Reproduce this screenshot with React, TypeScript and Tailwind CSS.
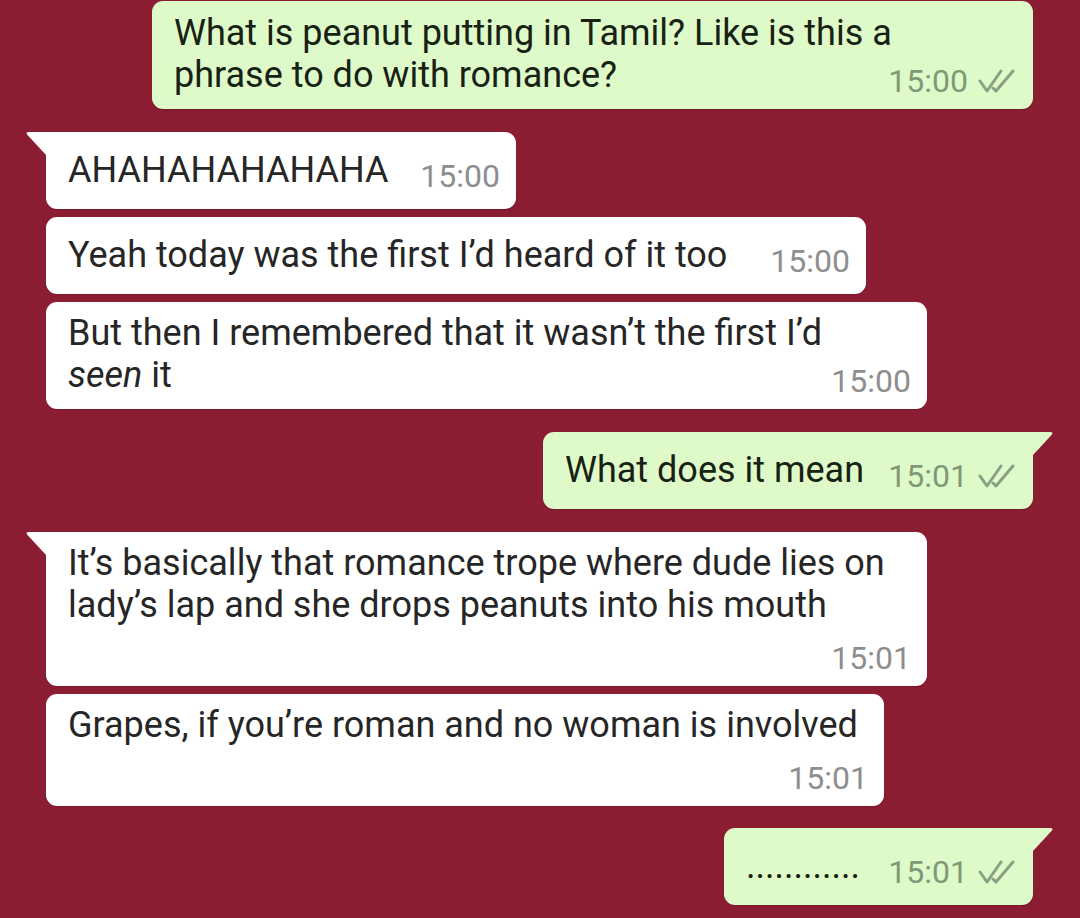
import React from "react";

type Mode = "inline" | "last" | "below";
type Msg = {
  out: boolean;
  tail: boolean;
  w: string;
  mt: string;
  lines: React.ReactNode[];
  time: string;
  mode: Mode;
  pt?: string;
};

const Checks = () => (
  <svg width="38" height="24" viewBox="0 0 38 24" fill="none" className="shrink-0">
    <path d="M2 12 L9 22 L23 2" stroke="#8aa085" strokeWidth="3" strokeLinecap="round" strokeLinejoin="round" />
    <path d="M15 19 L18 22 L35 2" stroke="#8aa085" strokeWidth="3" strokeLinecap="round" strokeLinejoin="round" />
  </svg>
);

const TailOut = () => (
  <svg width="21" height="23" viewBox="0 0 21 23" className="absolute left-full top-0">
    <path d="M0 0 H17 Q21 0 18.5 3 L0 23 Z" fill="#dffac9" />
  </svg>
);

const TailIn = () => (
  <svg width="21" height="23" viewBox="0 0 21 23" className="absolute right-full top-0">
    <path d="M21 0 H4 Q0 0 2.5 3 L21 23 Z" fill="#ffffff" />
  </svg>
);

const msgs: Msg[] = [
  {
    out: true,
    tail: false,
    w: "w-[881px]",
    mt: "mt-px",
    pt: "pt-[11px]",
    lines: ["What is peanut putting in Tamil? Like is this a", "phrase to do with romance?"],
    time: "15:00",
    mode: "last",
  },
  { out: false, tail: true, w: "w-[470px]", mt: "mt-[23px]", lines: ["AHAHAHAHAHAHA"], time: "15:00", mode: "inline" },
  {
    out: false,
    tail: false,
    w: "w-[820px]",
    mt: "mt-[8px]",
    lines: ["Yeah today was the first I\u2019d heard of it too"],
    time: "15:00",
    mode: "inline",
  },
  {
    out: false,
    tail: false,
    w: "w-[881px]",
    mt: "mt-[8px]",
    lines: [
      "But then I remembered that it wasn\u2019t the first I\u2019d",
      <>
        <i>seen</i> it
      </>,
    ],
    time: "15:00",
    mode: "last",
  },
  { out: true, tail: true, w: "w-[490px]", mt: "mt-[23px]", lines: ["What does it mean"], time: "15:01", mode: "inline" },
  {
    out: false,
    tail: true,
    w: "w-[881px]",
    mt: "mt-[23px]",
    lines: [
      "It\u2019s basically that romance trope where dude lies on",
      "lady\u2019s lap and she drops peanuts into his mouth",
    ],
    time: "15:01",
    mode: "below",
  },
  {
    out: false,
    tail: false,
    w: "w-[838px]",
    mt: "mt-[8px]",
    lines: ["Grapes, if you\u2019re roman and no woman is involved"],
    time: "15:01",
    mode: "below",
  },
  { out: true, tail: true, w: "w-[309px]", mt: "mt-[22px]", lines: ["............"], time: "15:01", mode: "inline" },
];

function Time({ m }: { m: Msg }) {
  return (
    <div className={"flex items-center gap-[10px] shrink-0 " + (m.out ? "text-[#7f9878]" : "text-[#8e8e8e]")}>
      <span className="text-[32px] leading-[30px]">{m.time}</span>
      {m.out && <Checks />}
    </div>
  );
}

function Bubble({ m }: { m: Msg }) {
  const base =
    "relative flex flex-col rounded-[11px] shadow-[0_1px_1px_rgba(0,0,0,0.18)] pl-[22px] " +
    (m.out ? "bg-[#dffac9] text-[#172214] self-end mr-[47px] pr-[17px] " : "bg-white text-[#262626] self-start ml-[46px] pr-[16px] ") +
    (m.tail ? (m.out ? "rounded-tr-none " : "rounded-tl-none ") : "") +
    m.w +
    " " +
    m.mt +
    " ";
  const text = (
    <div className="text-[36px] leading-[42px]">
      {m.lines.map((l, i) => (
        <div key={i} className="whitespace-nowrap">
          {l}
        </div>
      ))}
    </div>
  );
  if (m.mode === "inline") {
    return (
      <div className={base + "pt-[17px] pb-[18px]"}>
        {m.tail && (m.out ? <TailOut /> : <TailIn />)}
        <div className="flex items-end justify-between">
          {text}
          <Time m={m} />
        </div>
      </div>
    );
  }
  if (m.mode === "last") {
    return (
      <div className={base + (m.pt ?? "pt-[10px]") + " pb-[13px]"}>
        {m.tail && (m.out ? <TailOut /> : <TailIn />)}
        {text}
        <div className="self-end -mt-[30px]">
          <Time m={m} />
        </div>
      </div>
    );
  }
  return (
    <div className={base + "pt-[10px] pb-[13px]"}>
      {m.tail && (m.out ? <TailOut /> : <TailIn />)}
      {text}
      <div className="self-end mt-[17px]">
        <Time m={m} />
      </div>
    </div>
  );
}

export default function App() {
  return (
    <div
      className="w-[1080px] h-[918px] overflow-hidden bg-[#8b1d33] flex flex-col"
      style={{ fontFamily: "Roboto, 'Noto Sans', sans-serif" }}
    >
      {msgs.map((m, i) => (
        <Bubble key={i} m={m} />
      ))}
    </div>
  );
}
